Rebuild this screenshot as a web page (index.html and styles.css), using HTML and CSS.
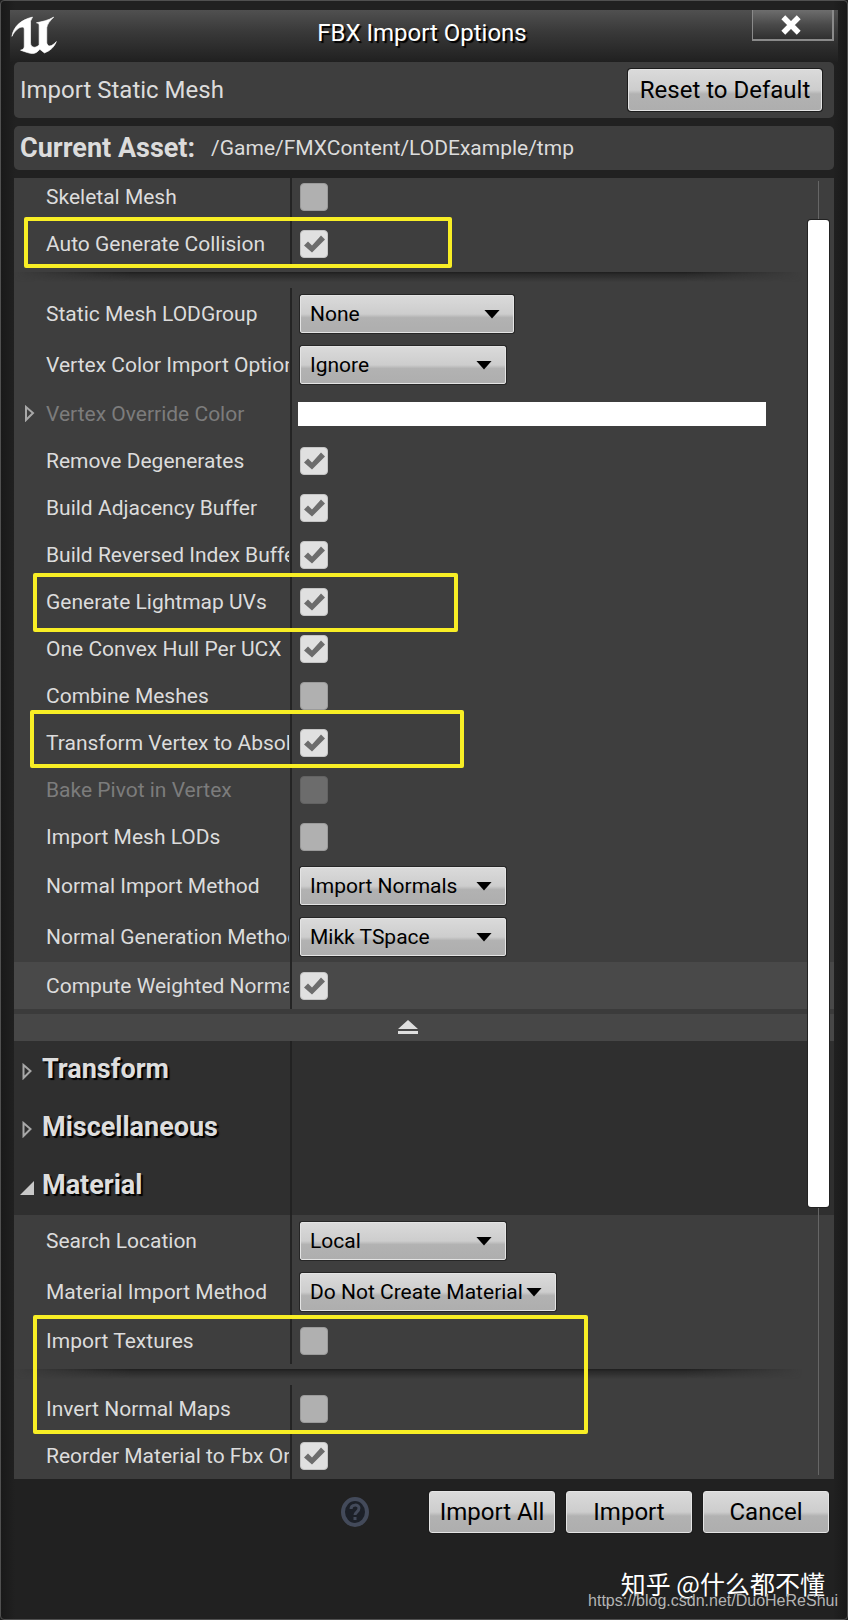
FILE: index.html
```html
<!DOCTYPE html>
<html lang="en">
<head>
    <meta charset="utf-8">
    <title>FBX Import Options</title>
    <link rel="stylesheet" href="styles.css">
</head>
<body>
    <form class="window">
        <div class="titlebar">
            <svg class="logo" viewBox="30 44 145 120" aria-hidden="true">
                <path d="M36 108 C40 80 62 58 98 50 L92 62 V128 C92 137 98 141 104 141 C110 141 116 137 118 133 V74 C118 70 114 68 110 67 C126 64 146 60 162 50 C150 62 142 72 141 82 V126 C141 133 146 137 150 137 C157 137 163 131 170 124 C164 140 152 152 134 158 L120 147 C114 155 106 160 98 160 C90 160 76 155 62 150 C70 148 73 144 73 138 V88 C73 82 71 80 67 80 C56 80 44 92 36 108 Z"/>
            </svg>
            <h1>FBX Import Options</h1>
            <button type="button" class="close" aria-label="Close">
                <svg viewBox="0 0 20 20"><path d="M3 3 L17 17 M17 3 L3 17"/></svg>
            </button>
        </div>

        <div class="bar bar-type">
            <span>Import Static Mesh</span>
            <button type="button" class="btn btn-reset">Reset to Default</button>
        </div>

        <div class="bar bar-asset">
            <strong>Current Asset:</strong>
            <span>/Game/FMXContent/LODExample/tmp</span>
        </div>

        <div class="panel">
            <div class="list">
                <div class="row">
                    <label class="name" for="skeletal">Skeletal Mesh</label>
                    <div class="value"><input type="checkbox" id="skeletal"></div>
                </div>
                <div class="row">
                    <label class="name" for="collision">Auto Generate Collision</label>
                    <div class="value"><input type="checkbox" id="collision" checked></div>
                    <span class="mark mark-collision"></span>
                </div>
                <div class="divider"></div>
                <div class="row row-select">
                    <label class="name" for="lodgroup">Static Mesh LODGroup</label>
                    <div class="value"><span class="select select-wide"><select id="lodgroup"><option>None</option></select></span></div>
                </div>
                <div class="row row-select">
                    <label class="name" for="vcolor">Vertex Color Import Option</label>
                    <div class="value"><span class="select"><select id="vcolor"><option>Ignore</option></select></span></div>
                </div>
                <div class="row disabled">
                    <div class="name name-expand">
                        <svg class="arrow" viewBox="0 0 11 17"><path d="M2 2 V15 L9 8 Z"/></svg>
                        <span>Vertex Override Color</span>
                    </div>
                    <div class="value value-color"><span class="swatch"></span></div>
                </div>
                <div class="row">
                    <label class="name" for="degenerates">Remove Degenerates</label>
                    <div class="value"><input type="checkbox" id="degenerates" checked></div>
                </div>
                <div class="row">
                    <label class="name" for="adjacency">Build Adjacency Buffer</label>
                    <div class="value"><input type="checkbox" id="adjacency" checked></div>
                </div>
                <div class="row">
                    <label class="name" for="reversed">Build Reversed Index Buffer</label>
                    <div class="value"><input type="checkbox" id="reversed" checked></div>
                </div>
                <div class="row">
                    <label class="name" for="lightmap">Generate Lightmap UVs</label>
                    <div class="value"><input type="checkbox" id="lightmap" checked></div>
                    <span class="mark mark-lightmap"></span>
                </div>
                <div class="row">
                    <label class="name" for="convex">One Convex Hull Per UCX</label>
                    <div class="value"><input type="checkbox" id="convex" checked></div>
                </div>
                <div class="row">
                    <label class="name" for="combine">Combine Meshes</label>
                    <div class="value"><input type="checkbox" id="combine"></div>
                </div>
                <div class="row">
                    <label class="name" for="absolute">Transform Vertex to Absolute</label>
                    <div class="value"><input type="checkbox" id="absolute" checked></div>
                    <span class="mark mark-absolute"></span>
                </div>
                <div class="row disabled">
                    <label class="name" for="pivot">Bake Pivot in Vertex</label>
                    <div class="value"><input type="checkbox" id="pivot" disabled></div>
                </div>
                <div class="row">
                    <label class="name" for="lods">Import Mesh LODs</label>
                    <div class="value"><input type="checkbox" id="lods"></div>
                </div>
                <div class="row row-select">
                    <label class="name" for="nimport">Normal Import Method</label>
                    <div class="value"><span class="select"><select id="nimport"><option>Import Normals</option></select></span></div>
                </div>
                <div class="row row-select">
                    <label class="name" for="ngen">Normal Generation Method</label>
                    <div class="value"><span class="select"><select id="ngen"><option>Mikk TSpace</option></select></span></div>
                </div>
                <div class="row hover">
                    <label class="name" for="weighted">Compute Weighted Normals</label>
                    <div class="value"><input type="checkbox" id="weighted" checked></div>
                </div>

                <button type="button" class="collapse" aria-label="Hide advanced">
                    <svg viewBox="0 0 20 14"><path d="M10 0 L20 9 H0 Z M0 11 H20 V14 H0 Z"/></svg>
                </button>

                <button type="button" class="category">
                    <span class="category-name">
                        <svg class="arrow" viewBox="0 0 11 17"><path d="M2 2 V15 L9 8 Z"/></svg>
                        Transform
                    </span>
                </button>
                <button type="button" class="category">
                    <span class="category-name">
                        <svg class="arrow" viewBox="0 0 11 17"><path d="M2 2 V15 L9 8 Z"/></svg>
                        Miscellaneous
                    </span>
                </button>
                <button type="button" class="category">
                    <span class="category-name">
                        <svg class="arrow-open" viewBox="0 0 14 14"><path d="M14 0 V14 H0 Z"/></svg>
                        Material
                    </span>
                </button>

                <div class="row row-select">
                    <label class="name" for="search">Search Location</label>
                    <div class="value"><span class="select"><select id="search"><option>Local</option></select></span></div>
                </div>
                <div class="row row-select">
                    <label class="name" for="mimport">Material Import Method</label>
                    <div class="value"><span class="select"><select id="mimport"><option>Do Not Create Material</option></select></span></div>
                </div>
                <div class="row">
                    <label class="name" for="textures">Import Textures</label>
                    <div class="value"><input type="checkbox" id="textures"></div>
                    <span class="mark mark-textures"></span>
                </div>
                <div class="divider"></div>
                <div class="row">
                    <label class="name" for="invert">Invert Normal Maps</label>
                    <div class="value"><input type="checkbox" id="invert"></div>
                </div>
                <div class="row">
                    <label class="name" for="reorder">Reorder Material to Fbx Order</label>
                    <div class="value"><input type="checkbox" id="reorder" checked></div>
                </div>
            </div>
            <div class="scrollbar"><div class="thumb"></div></div>
        </div>

        <div class="footer">
            <button type="button" class="help" aria-label="Help">
                <svg viewBox="0 0 30 32">
                    <ellipse cx="15" cy="16" rx="12" ry="13"/>
                    <path d="M11 13 C11 8 19 8 19 12 C19 16 15 16 15 19 M15 21 V24"/>
                </svg>
            </button>
            <button type="button" class="btn">Import All</button>
            <button type="button" class="btn">Import</button>
            <button type="button" class="btn">Cancel</button>
        </div>

        <div class="credit" lang="zh">知乎 @什么都不懂</div>
        <div class="source">https://blog.csdn.net/DuoHeReShui</div>
    </form>
</body>
</html>
```

FILE: styles.css
```css
* {
    box-sizing: border-box;
}
body {
    margin: 0;
    background: #1e1e1e;
    color: #dcdcdc;
    font-family: Roboto, "Noto Sans CJK SC", sans-serif;
    font-size: 21px;
}
button, select {
    font-family: inherit;
    color: #000;
}
.window {
    position: relative;
    min-height: 100vh;
    padding: 9px 13px 0;
    border: 1px solid #505050;
    border-radius: 4px;
    background: linear-gradient(90deg, #191919, #212121 14px, #212121 calc(100% - 14px), #191919);
}

/* title bar */
.titlebar {
    display: grid;
    grid-template-columns: 82px 1fr 82px;
    align-items: start;
    height: 52px;
    margin: 0 -4px;
    padding-right: 4px;
    background: linear-gradient(#505050, #3a3a3a 40%, #202020);
}
.logo {
    width: 48px;
    height: 40px;
    margin-top: 5px;
    fill: #fff;
    stroke: #fff;
    stroke-width: 2;
}
h1 {
    margin: 0;
    color: #fff;
    font-size: 24px;
    font-weight: 400;
    line-height: 47px;
    text-align: center;
    text-shadow: 2px 2px 1px #000;
}
.close {
    height: 31px;
    padding: 0 4px 0 0;
    border: 1px solid #8a8a8a;
    border-width: 0 2px 2px 1px;
    background: linear-gradient(#6e6e6e, #4a4a4a 50%, #303030);
}
.close svg {
    display: block;
    width: 22px;
    height: 22px;
    margin: 0 auto;
    fill: none;
    stroke: #fff;
    stroke-width: 5;
}

/* header bars */
.bar {
    display: flex;
    align-items: center;
    margin-bottom: 8px;
    padding: 0 12px 0 6px;
    border-radius: 5px;
    background: #3e3e3e;
}
.bar-type {
    justify-content: space-between;
    height: 56px;
    font-size: 24px;
}
.bar-asset {
    gap: 16px;
    height: 44px;
}
.bar-asset strong {
    font-size: 27px;
}

.btn {
    width: 126px;
    height: 42px;
    padding: 0;
    border: 1px solid #e4e4e4;
    border-radius: 3px;
    background: linear-gradient(#dadada, #cdcdcd 50%, #b2b2b2 60%, #aeaeae);
    box-shadow: 0 0 0 1px #1c1c1c;
    font-size: 24px;
}
.btn-reset {
    width: 194px;
}

/* property list */
.panel {
    position: relative;
    overflow: hidden;
    background: #3e3e3e;
}
.list {
    display: flex;
    flex-direction: column;
    /* scrolled a little way past the first row */
    margin-top: -5px;
}
.row {
    display: flex;
    position: relative;
    height: 47px;
}
.row-select {
    height: 51px;
}
.row.hover {
    background: #494949;
}
.name {
    flex: none;
    width: 278px;
    padding-left: 32px;
    padding-right: 1px;
    border-right: 2px solid #242424;
    line-height: 48px;
    white-space: nowrap;
    overflow: clip;
    overflow-clip-margin: content-box;
}
.row-select .name {
    line-height: 52px;
}
.name-expand {
    display: flex;
    align-items: center;
    gap: 11px;
    padding-left: 10px;
}
.disabled .name {
    color: #7c7c7c;
}
.value {
    display: flex;
    flex: 1;
    align-items: center;
    padding-left: 8px;
}
.value-color {
    padding: 0 68px 0 6px;
}
.swatch {
    flex: 1;
    height: 24px;
    background: #fff;
}
.divider {
    height: 21px;
    margin-right: 32px;
    padding-top: 5px;
}
.divider::before {
    content: "";
    display: block;
    height: 10px;
    background: linear-gradient(#1e1e1e, #2a2a2a 25%, transparent);
    -webkit-mask-image: linear-gradient(90deg, transparent, #000 15%, #000 85%, transparent);
    mask-image: linear-gradient(90deg, transparent, #000 15%, #000 85%, transparent);
}

input[type="checkbox"] {
    appearance: none;
    width: 28px;
    height: 28px;
    margin: 0;
    border: 1px solid #9a9a9a;
    border-radius: 4px;
    background: #b0b0b0;
}
input[type="checkbox"]:checked {
    border-color: #c4c4c4;
    background: #e0e0e0;
}
input[type="checkbox"]:checked::before {
    content: "";
    display: block;
    width: 26px;
    height: 26px;
    background: #6c6c6c;
    clip-path: polygon(3px 15px, 7px 11px, 11px 15px, 20px 5px, 24px 9px, 11px 22px);
}
input[type="checkbox"]:disabled {
    border-color: #626262;
    background: #6c6c6c;
}

.select {
    position: relative;
}
.select::after {
    content: "";
    position: absolute;
    top: 15px;
    right: 14px;
    width: 16px;
    height: 9px;
    background: #000;
    clip-path: polygon(0 0, 100% 0, 50% 100%);
    pointer-events: none;
}
select {
    appearance: none;
    display: block;
    min-width: 206px;
    height: 38px;
    padding: 0 32px 0 9px;
    border: 1px solid #e4e4e4;
    border-radius: 2px;
    background: linear-gradient(#dadada, #cdcdcd 50%, #b2b2b2 60%, #aeaeae);
    box-shadow: 0 0 0 1px #262626;
    font-size: 21px;
}
.select-wide select {
    min-width: 214px;
}

.arrow {
    width: 11px;
    height: 17px;
    fill: none;
    stroke: #a8a8a8;
    stroke-width: 2;
}
.arrow-open {
    width: 14px;
    height: 14px;
    fill: #c8c8c8;
}

.collapse {
    display: flex;
    justify-content: center;
    height: 32px;
    padding: 6px 32px 0 0;
    border: 0;
    border-top: 5px solid #3b3b3b;
    background: #474747;
}
.collapse svg {
    width: 20px;
    height: 14px;
    fill: #dedede;
}

.category {
    display: flex;
    height: 58px;
    padding: 0;
    border: 0;
    background: #2f2f2f;
    color: #dedede;
    font-size: 27px;
    font-weight: 700;
    text-shadow: 2px 2px 1px #000;
}
.category-name {
    display: flex;
    align-items: center;
    gap: 8px;
    width: 278px;
    height: 58px;
    padding: 0 0 3px 6px;
    border-right: 2px solid #222;
}
.category svg {
    width: 14px;
    margin-top: 6px;
}

.scrollbar {
    position: absolute;
    top: 3px;
    right: 5px;
    bottom: 4px;
    width: 21px;
    background: linear-gradient(#666, #666) center / 1px 100% no-repeat;
}
.thumb {
    position: relative;
    top: 3%;
    height: 76.3%;
    border-radius: 3px;
    background: #fff;
    box-shadow: 0 0 0 1px #222;
}

/* highlight frames drawn over the rows */
.mark {
    position: absolute;
    z-index: 1;
    border: 4px solid #f8ee25;
    border-radius: 2px;
    pointer-events: none;
}
.mark-collision {
    top: -3px;
    left: 10px;
    width: 428px;
    height: 51px;
}
.mark-lightmap {
    top: -5px;
    left: 19px;
    width: 425px;
    height: 59px;
}
.mark-absolute {
    top: -9px;
    left: 16px;
    width: 434px;
    height: 58px;
}
.mark-textures {
    top: -2px;
    left: 19px;
    width: 555px;
    height: 119px;
}

/* footer */
.footer {
    display: flex;
    justify-content: flex-end;
    align-items: center;
    gap: 11px;
    padding: 12px 5px 0 0;
}
.help {
    margin-right: 48px;
    padding: 0;
    border: 0;
    background: none;
}
.help svg {
    display: block;
    width: 30px;
    height: 32px;
    fill: #1c2028;
    stroke: #434a5a;
    stroke-width: 4;
}
.help path {
    fill: none;
    stroke-width: 3;
}
.credit {
    position: absolute;
    right: 22px;
    bottom: 18px;
    color: #fff;
    font-family: "Noto Sans CJK SC", sans-serif;
    font-size: 25px;
    line-height: 36px;
}
.source {
    position: absolute;
    right: 9px;
    bottom: 8px;
    color: #b4b4b4;
    font-family: "Liberation Sans", Arial, sans-serif;
    font-size: 16px;
    line-height: 20px;
}
```
